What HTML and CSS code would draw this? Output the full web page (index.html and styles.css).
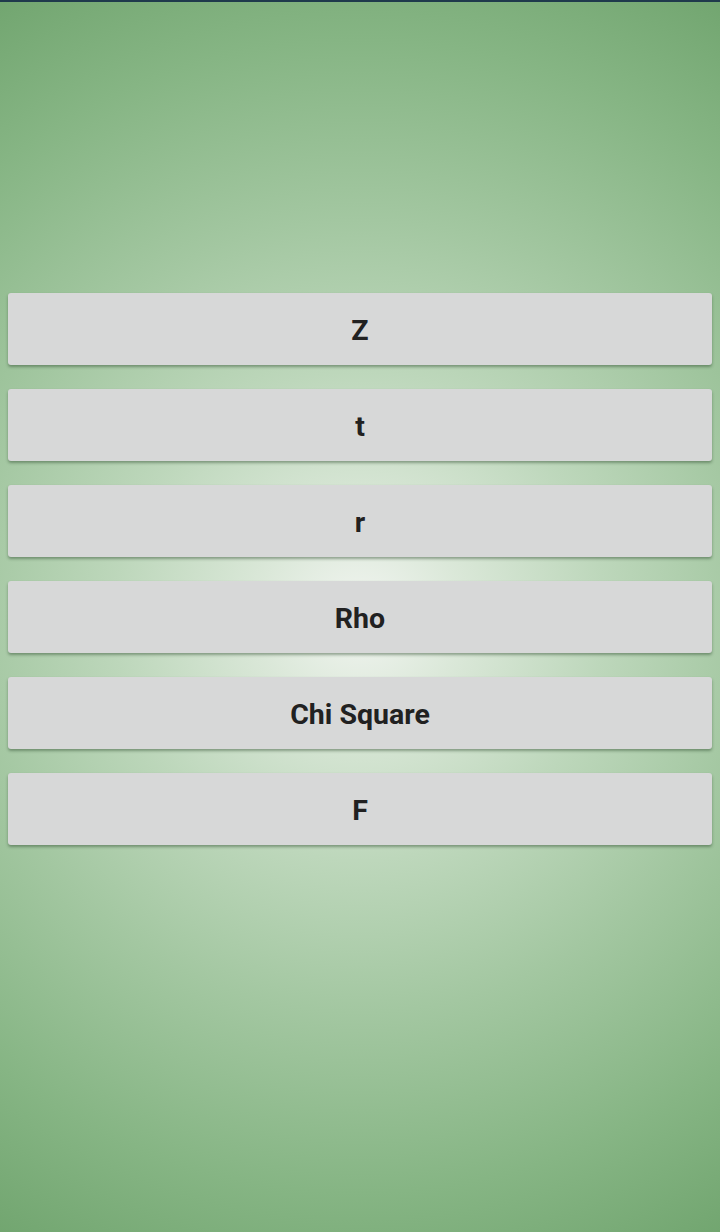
FILE: index.html
```html
<!doctype html>
<html lang="en">
<head>
  <meta charset="UTF-8">
  <meta name="viewport" content="width=device-width, initial-scale=1">
  <title>Tests</title>
  <link rel="stylesheet" href="styles.css">
</head>
<body>
  <div class="status-line"></div>
  <main class="menu">
    <button class="menu-item">Z</button>
    <button class="menu-item">t</button>
    <button class="menu-item">r</button>
    <button class="menu-item">Rho</button>
    <button class="menu-item">Chi Square</button>
    <button class="menu-item">F</button>
  </main>
</body>
</html>
```

FILE: styles.css
```css
html, body {
  margin: 0;
  padding: 0;
  height: 100%;
}

body {
  font-family: Roboto, 'Liberation Sans', Arial, sans-serif;
  background: radial-gradient(circle 720px at 50% 50%, #f2f5f1 0%, #dbe8d9 14%, #bdd7bb 34%, #a3c7a1 55%, #86b584 80%, #71a56f 100%);
  background-color: #71a56f;
  min-height: 1232px;
}

.status-line {
  height: 2px;
  background-color: #1f3a4c;
}

.menu {
  display: flex;
  flex-direction: column;
  gap: 24px;
  padding: 291px 8px 0;
}

.menu-item {
  height: 72px;
  padding-top: 4px;
  border: none;
  border-radius: 3px;
  background-color: #d7d8d8;
  box-shadow: 0 2px 3px rgba(40, 70, 40, 0.45);
  font-family: Roboto, 'Liberation Sans', Arial, sans-serif;
  font-size: 28.5px;
  font-weight: bold;
  color: #212121;
  text-align: center;
  cursor: pointer;
}
```
